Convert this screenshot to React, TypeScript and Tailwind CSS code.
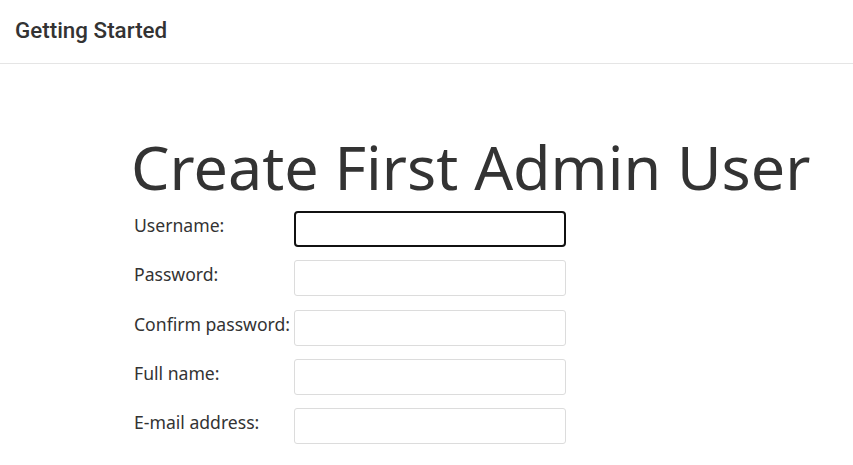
const fields = [
  { label: "Username:", focused: true },
  { label: "Password:" },
  { label: "Confirm password:" },
  { label: "Full name:" },
  { label: "E-mail address:" },
];

const App = () => {
  return (
    <div className="min-h-[465px] bg-white text-[#333]">
      {/* Header */}
      <div className="h-16 border-b border-[#e5e5e5] flex items-center px-[15px] pb-[2px]">
        <span className="font-['Roboto',sans-serif] text-[22.4px] font-medium text-[#333]">
          Getting Started
        </span>
      </div>

      {/* Form */}
      <div className="pl-[131px] pt-[72px]">
        <h1 className="font-['Noto_Sans',sans-serif] text-[61px] font-normal leading-none whitespace-nowrap text-[#333]">
          Create First Admin User
        </h1>
        <div className="mt-[14px] flex flex-col gap-[13.25px] font-['Noto_Sans',sans-serif] text-[17.6px] text-[#333]">
          {fields.map((f) => (
            <div key={f.label} className="flex items-start">
              <label className="w-[163px] pl-[3px] pt-[2px] leading-[24px] whitespace-nowrap">
                {f.label}
              </label>
              <div
                className={
                  f.focused
                    ? "w-[272px] h-9 rounded-[4px] border-2 border-[#111]"
                    : "w-[272px] h-9 rounded-[3px] border border-[#dcdcdc]"
                }
              />
            </div>
          ))}
        </div>
      </div>
    </div>
  );
};

export default App;
